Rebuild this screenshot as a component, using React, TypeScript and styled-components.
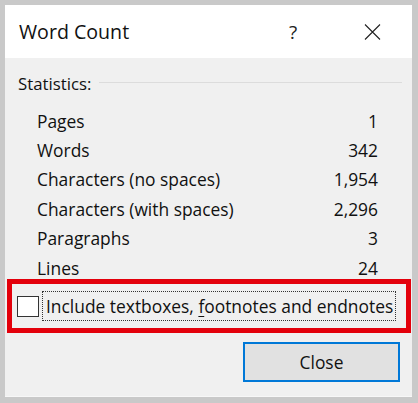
import styled, { createGlobalStyle } from "styled-components";

const GlobalStyle = createGlobalStyle`
  html, body {
    margin: 0;
    padding: 0;
    background: #c9c9c9;
  }
  * {
    box-sizing: border-box;
  }
`;

const Frame = styled.div`
  width: 418px;
  height: 403px;
  padding: 5px 6px 6px 5px;
  background: #c9c9c9;
  font-family: "Open Sans", "Noto Sans", sans-serif;
  color: #111;
`;

const Dialog = styled.div`
  height: 100%;
  display: flex;
  flex-direction: column;
  background: #f0f0f0;
  border-bottom: 1px solid #f7f7f7;
`;

const TitleBar = styled.div`
  height: 53px;
  flex: none;
  display: flex;
  align-items: center;
  background: #ffffff;
  padding-left: 14px;
`;

const Title = styled.div`
  flex: 1;
  font-size: 19.6px;
  color: #111;
`;

const TitleButton = styled.div<{ $gap?: number }>`
  width: 46px;
  height: 100%;
  display: flex;
  align-items: center;
  justify-content: center;
  font-size: 19px;
  color: #222;
  margin-right: ${(p) => p.$gap ?? 0}px;
`;

const Body = styled.div`
  flex: 1;
  display: flex;
  flex-direction: column;
  padding: 12px 0 0 0;
`;

const GroupHeader = styled.div`
  display: flex;
  align-items: center;
  gap: 8px;
  height: 26px;
  padding: 0 10px 0 13px;
  font-size: 16.8px;

  &::after {
    content: "";
    flex: 1;
    height: 1px;
    background: #dcdcdc;
    margin-top: -2px;
  }
`;

const StatsList = styled.div`
  display: flex;
  flex-direction: column;
  padding: 10px 34px 0 32px;
`;

const StatRow = styled.div`
  height: 29.4px;
  display: flex;
  align-items: center;
  justify-content: space-between;
  font-size: 17.4px;
`;

const Highlight = styled.div`
  margin: -3px 1px 0 2px;
  height: 54px;
  border: 5px solid #e3000b;
  display: flex;
  align-items: center;
  padding-left: 5px;
  gap: 4px;
`;

const CheckBox = styled.span`
  width: 22px;
  height: 21px;
  border: 1px solid #333;
  background: #fff;
  flex: none;
`;

const CheckLabel = styled.span`
  height: 28px;
  display: flex;
  align-items: center;
  padding: 0 2px 0 3px;
  outline: 1px dotted #333;
  font-size: 17.4px;
  white-space: nowrap;

  u {
    text-decoration-thickness: 1px;
    text-underline-offset: 3px;
  }
`;

const Footer = styled.div`
  display: flex;
  justify-content: flex-end;
  padding: 9px 12px 0 0;
`;

const Button = styled.button`
  width: 157px;
  height: 40px;
  border: 2px solid #0078d7;
  background: #e1e1e1;
  font-family: inherit;
  font-size: 17.4px;
  color: #111;
  padding: 0;
`;

const stats: [string, string][] = [
  ["Pages", "1"],
  ["Words", "342"],
  ["Characters (no spaces)", "1,954"],
  ["Characters (with spaces)", "2,296"],
  ["Paragraphs", "3"],
  ["Lines", "24"],
];

export default function App() {
  return (
    <Frame>
      <GlobalStyle />
      <Dialog>
        <TitleBar>
          <Title>Word Count</Title>
          <TitleButton $gap={33}>?</TitleButton>
          <TitleButton $gap={17}>
            <svg width="17" height="16" viewBox="0 0 17 16">
              <path d="M1 0.5L16 15.5M16 0.5L1 15.5" stroke="#222" strokeWidth="1.1" fill="none" />
            </svg>
          </TitleButton>
        </TitleBar>
        <Body>
          <GroupHeader>Statistics:</GroupHeader>
          <StatsList>
            {stats.map(([label, value]) => (
              <StatRow key={label}>
                <span>{label}</span>
                <span>{value}</span>
              </StatRow>
            ))}
          </StatsList>
          <Highlight>
            <CheckBox />
            <CheckLabel>
              <span>
                Include textboxes, <u>f</u>ootnotes and endnotes
              </span>
            </CheckLabel>
          </Highlight>
          <Footer>
            <Button>Close</Button>
          </Footer>
        </Body>
      </Dialog>
    </Frame>
  );
}
